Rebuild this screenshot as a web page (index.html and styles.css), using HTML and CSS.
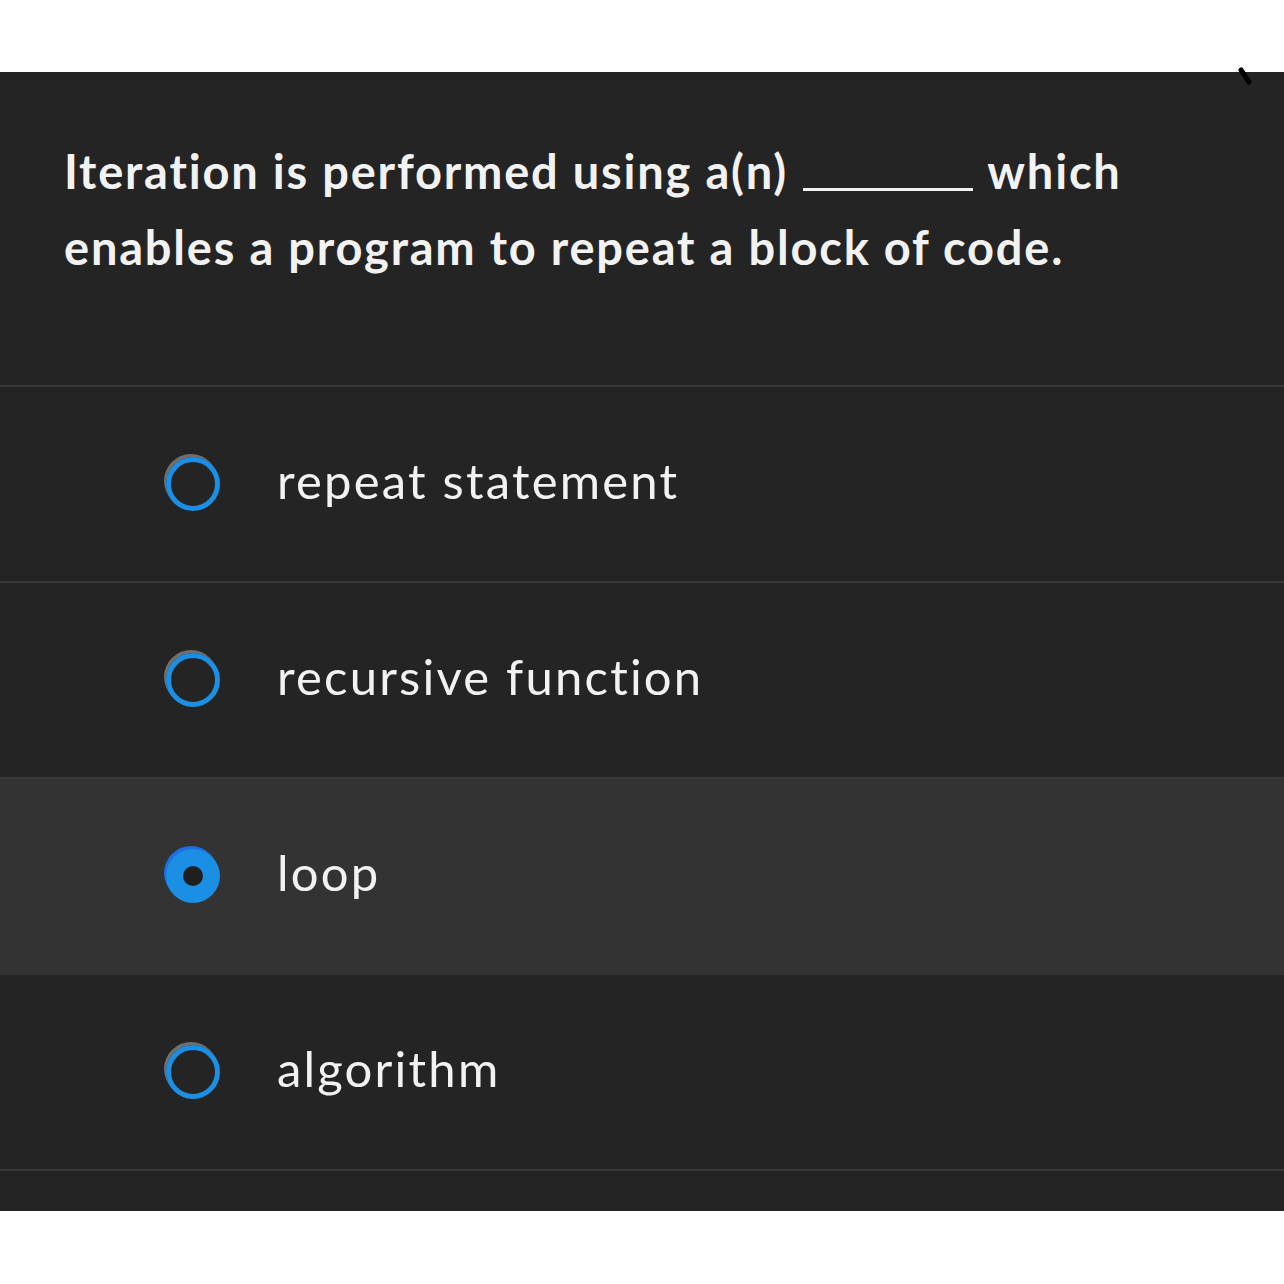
FILE: index.html
```html
<!DOCTYPE html>
<html>
<head>
<meta charset="utf-8">
<link rel="stylesheet" href="styles.css">
</head>
<body>
<div class="panel">
  <svg class="corner-mark" width="24" height="20" viewBox="0 0 24 20"><line x1="5" y1="-2" x2="13" y2="10" stroke="#000" stroke-width="5" stroke-linecap="round"/></svg>
  <div class="question">Iteration is performed using a(n) <span class="blank"></span> which enables a program to repeat a block of code.</div>
  <div class="options">
    <div class="option"><span class="radio"></span><span class="label">repeat statement</span></div>
    <div class="option"><span class="radio"></span><span class="label">recursive function</span></div>
    <div class="option selected"><span class="radio"></span><span class="label">loop</span></div>
    <div class="option"><span class="radio"></span><span class="label">algorithm</span></div>
  </div>
</div>
</body>
</html>
```
FILE: styles.css
```css
html, body { margin: 0; padding: 0; background: #fff; }
body { padding-top: 72px; height: 1284px; box-sizing: border-box; }
.panel {
  position: relative;
  background: #242424;
  height: 1139px;
  font-family: Lato, "Open Sans", sans-serif;
  color: #f2f2f2;
}
.corner-mark { position: absolute; left: 1236px; top: 0; overflow: visible; }
.question {
  box-sizing: border-box;
  height: 313px;
  padding: 61px 100px 0 64px;
  font-size: 47px;
  font-weight: 700;
  line-height: 76px;
  letter-spacing: 1.8px;
}
.blank {
  display: inline-block;
  width: 170px;
  height: 3px;
  background: #f2f2f2;
  vertical-align: baseline;
  margin: 0 2px 0 2px;
  position: relative;
  top: 2px;
}
.options { border-top: 2px solid #383838; }
.option {
  display: flex;
  align-items: center;
  height: 194px;
  border-bottom: 2px solid #383838;
  padding-left: 166px;
}
.option.selected { background: #333333; border-bottom-color: #333333; }
.radio {
  position: relative;
  box-sizing: border-box;
  width: 54px;
  height: 54px;
  border-radius: 50%;
  border: 5px solid #1a8fe3;
  margin-right: 57px;
  box-shadow: -2px -3px 0 0 #6f6f6f;
  flex: none;
}
.selected .radio {
  border: none;
  background: #1a8fe3;
  box-shadow: -2px -3px 0 0 #1c6fe0;
}
.selected .radio::after {
  content: "";
  position: absolute;
  left: 17px; top: 17px;
  width: 20px; height: 20px;
  border-radius: 50%;
  background: #1f1f1f;
}
.label {
  font-size: 49px;
  font-weight: 400;
  letter-spacing: 2.2px;
  position: relative;
  top: -4px;
}
```
